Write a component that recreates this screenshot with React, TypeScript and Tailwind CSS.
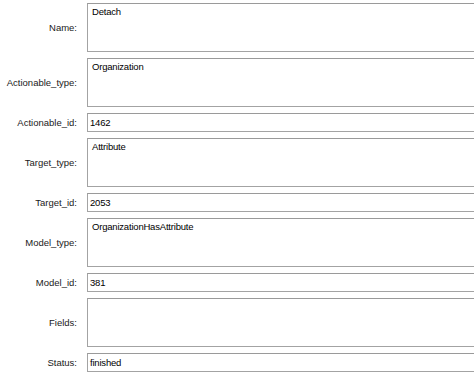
const rows: { label: string; value: string; tall: boolean }[] = [
  { label: "Name:", value: "Detach", tall: true },
  { label: "Actionable_type:", value: "Organization", tall: true },
  { label: "Actionable_id:", value: "1462", tall: false },
  { label: "Target_type:", value: "Attribute", tall: true },
  { label: "Target_id:", value: "2053", tall: false },
  { label: "Model_type:", value: "OrganizationHasAttribute", tall: true },
  { label: "Model_id:", value: "381", tall: false },
  { label: "Fields:", value: "", tall: true },
  { label: "Status:", value: "finished", tall: false },
];

const App = () => {
  return (
    <div
      className="w-[474px] h-[372px] overflow-hidden bg-white pt-[3px] flex flex-col gap-[6px] text-[9.5px] text-[#1a1a1a]"
      style={{ fontFamily: "Tahoma, 'Liberation Sans', sans-serif" }}
    >
      {rows.map((r) => (
        <div key={r.label} className="flex items-center">
          <div className="w-[78px] shrink-0 text-right pr-[1px] pt-[2px] whitespace-nowrap">{r.label}</div>
          <div
            className={
              r.tall
                ? "ml-[9px] w-[420px] shrink-0 h-[49px] border border-[#a3a3a3] border-t-[#9a9a9a] px-[4px] pt-[2px] leading-[12px] tracking-[-0.2px] text-black"
                : "ml-[9px] w-[420px] shrink-0 h-[19px] border border-[#a3a3a3] border-t-[#9a9a9a] px-[2px] leading-[17px] tracking-[-0.2px] text-black"
            }
          >
            {r.value}
          </div>
        </div>
      ))}
    </div>
  );
};

export default App;
